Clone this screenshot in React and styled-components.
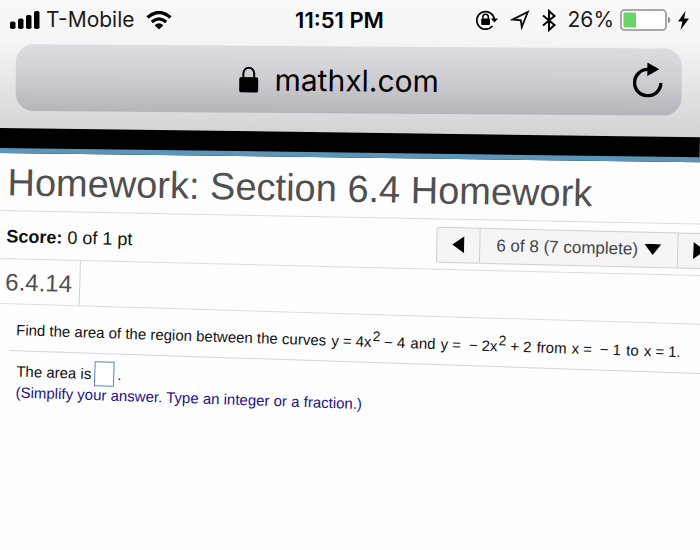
import React from "react";
import styled, { createGlobalStyle } from "styled-components";

function StatusBar() {
  return (
    <StatusContainer>
      <StatusGroup>
        <svg width="30" height="18" viewBox="0 0 30 18">
          <rect x="0" y="10.500" width="5.500" height="7.500" rx="1.800" />
          <rect x="8" y="7.500" width="5.500" height="10.500" rx="1.800" />
          <rect x="16" y="4" width="5.500" height="14" rx="1.800" />
          <rect x="24" y="0" width="5.500" height="18" rx="1.800" />
        </svg>
        <StatusText>T-Mobile</StatusText>
        <WifiIcon />
      </StatusGroup>
      <Time>11:51 PM</Time>
      <StatusGroup $end>
        <RotationLockIcon />
        <LocationIcon />
        <BluetoothIcon />
        <BatteryGroup>
          <StatusText>26%</StatusText>
          <BatteryIcon />
          <BoltIcon />
        </BatteryGroup>
      </StatusGroup>
    </StatusContainer>
  );
}

function WifiIcon() {
  return (
    <WifiSvg width="26" height="19" viewBox="0 0 26 19">
      <path d="M1.500 6.600 Q13 -3.600 24.500 6.600" strokeWidth="3.400" />
      <path d="M5.800 11 Q13 4.600 20.200 11" strokeWidth="3.200" />
      <path d="M13 18.600 L8.600 14.300 Q13 10.400 17.400 14.300 Z" fill="#000" stroke="none" />
    </WifiSvg>
  );
}

function RotationLockIcon() {
  return (
    <svg width="22" height="20" viewBox="0 0 22 20">
      <path
        d="M16.400 16 A8.800 8.800 0 1 1 18.300 9"
        fill="none"
        stroke="#000"
        strokeWidth="1.700"
      />
      <path d="M14.800 8.600 H22 L18.400 12.600 Z" />
      <rect x="5.200" y="8.600" width="8.800" height="6.400" rx="1" />
      <path d="M6.900 9.500 V7 A2.700 2.700 0 0 1 12.300 7 V9.500" fill="none" stroke="#000" strokeWidth="1.500" />
    </svg>
  );
}

function LocationIcon() {
  return (
    <svg width="20" height="20" viewBox="0 0 20 20">
      <path
        d="M17.800 2 L11.800 17 L10.800 10.200 L2.500 9.600 Z"
        fill="none"
        stroke="#111"
        strokeWidth="1.900"
      />
    </svg>
  );
}

function BluetoothIcon() {
  return (
    <svg width="14" height="23" viewBox="0 0 14 23">
      <path
        d="M1 6.500 L12.500 16 L7 21 V2 L12.500 7 L1 16.500"
        fill="none"
        stroke="#000"
        strokeWidth="2"
      />
    </svg>
  );
}

function BatteryIcon() {
  return (
    <svg width="52" height="22" viewBox="0 0 52 22">
      <rect x="1" y="1" width="45" height="20" rx="3.500" fill="#fff" stroke="#8f8f8f" strokeWidth="1.500" />
      <rect x="3.500" y="3.500" width="12.500" height="15" fill="#6bd568" />
      <path d="M48.500 8 Q51.500 11 48.500 14 Z" fill="#8f8f8f" stroke="#8f8f8f" />
    </svg>
  );
}

function BoltIcon() {
  return (
    <svg width="11" height="19" viewBox="0 0 11 19">
      <path d="M7.500 0 L0 10.500 H4.500 L2.500 19 L11 7.500 H6.200 Z" />
    </svg>
  );
}

function LockIcon() {
  return (
    <svg width="20" height="26" viewBox="0 0 20 26">
      <rect x="0.500" y="10.500" width="19" height="15.500" rx="2" />
      <path d="M4.600 11 V7 A5.400 5.900 0 0 1 15.400 7 V11" fill="none" stroke="#000" strokeWidth="2" />
    </svg>
  );
}

function ReloadIcon() {
  return (
    <svg width="30" height="35" viewBox="0 0 30 35">
      <path
        d="M28.200 20.500 A13.200 13.200 0 1 1 15 7"
        fill="none"
        stroke="#000"
        strokeWidth="3.400"
      />
      <path d="M14.500 0 L26.500 6.800 L14.500 13.500 Z" />
    </svg>
  );
}

function Arrow({ points, width = 12, height = 17 }) {
  return (
    <svg width={width} height={height} viewBox={`0 0 ${width} ${height}`}>
      <polygon points={points} />
    </svg>
  );
}

function QuestionNav() {
  return (
    <NavContainer>
      <NavButton aria-label="Previous question">
        <Arrow points="12,0 12,17 0,8.500" />
      </NavButton>
      <NavPicker>
        <NavSelect aria-label="Question">
          <option>6 of 8 (7 complete)</option>
        </NavSelect>
        <Arrow points="0,0 17,0 8.500,11" width={17} height={11} />
      </NavPicker>
      <NavButton aria-label="Next question">
        <Arrow points="0,0 12,8.500 0,17" />
      </NavButton>
    </NavContainer>
  );
}

function Exercise() {
  return (
    <>
      <Question>
        Find the area of the region between the curves{" "}
        <Formula>
          y<Op>=</Op>4x<Power>2</Power>
          <Op>−</Op>4
        </Formula>{" "}
        and{" "}
        <Formula>
          y<Op>=</Op>
          <Sign>−</Sign>2x<Power>2</Power>
          <Op>+</Op>2
        </Formula>{" "}
        from{" "}
        <Formula>
          x<Op>=</Op>
          <Sign>−</Sign>1
        </Formula>{" "}
        to{" "}
        <Formula>
          x<Op>=</Op>1.
        </Formula>
      </Question>
      <Answer>
        <AnswerLine>
          <label htmlFor="area">The area is</label>
          <AnswerInput id="area" type="text" />
          <span>.</span>
        </AnswerLine>
        <Hint>(Simplify your answer. Type an integer or a fraction.)</Hint>
      </Answer>
    </>
  );
}

function App() {
  return (
    <Page>
      <GlobalStyle />
      <BrowserChrome>
        <StatusBar />
        <AddressBar>
          <Site>
            <LockIcon />
            <span>mathxl.com</span>
          </Site>
          <ReloadButton aria-label="Reload">
            <ReloadIcon />
          </ReloadButton>
        </AddressBar>
      </BrowserChrome>
      <Band />
      <TitleRow>
        <Title>Homework: Section 6.4 Homework</Title>
      </TitleRow>
      <ScoreRow>
        <Score>
          <b>Score:</b> 0 of 1 pt
        </Score>
        <QuestionNav />
      </ScoreRow>
      <NumberRow>
        <ExerciseNumber>6.4.14</ExerciseNumber>
      </NumberRow>
      <Exercise />
    </Page>
  );
}

export default App;

const GlobalStyle = createGlobalStyle`
  * {
    box-sizing: border-box;
  }
  body {
    margin: 0;
    background: #fefefe;
  }
  svg {
    display: block;
    flex-shrink: 0;
  }
`;

const Page = styled.div`
  min-height: 100vh;
  overflow: hidden;
  background: #fefefe;
  color: #111;
  font-family: "Liberation Sans", Arial, sans-serif;
`;

const BrowserChrome = styled.header`
  height: 138px;
  margin-bottom: -10px;
  color: #000;
  background: linear-gradient(#f9f9f9 0, #f6f6f6 40px, #d2d2d2 138px);
  font-family: Inter, sans-serif;
`;

const StatusContainer = styled.div`
  display: grid;
  grid-template-columns: 1fr auto 1fr;
  align-items: center;
  height: 40px;
  padding: 0 11px 0 10px;
`;

const StatusGroup = styled.div`
  display: flex;
  align-items: center;
  justify-content: ${(props) => (props.$end ? "flex-end" : "flex-start")};
  gap: ${(props) => (props.$end ? "12px" : "6px")};
`;

const StatusText = styled.span`
  font-size: 21px;
  line-height: 24px;
  color: #1a1a1a;
`;

const Time = styled.span`
  margin-right: 20px;
  font-size: 22px;
  line-height: 24px;
  font-weight: 600;
`;

const BatteryGroup = styled.div`
  display: flex;
  align-items: center;
  gap: 6px;
`;

const WifiSvg = styled.svg`
  margin-left: 5px;
  fill: none;
  stroke: #000;
`;

const AddressBar = styled.div`
  display: grid;
  grid-template-columns: 1fr auto 1fr;
  align-items: center;
  height: 67px;
  margin: 4px 18px 0 16px;
  padding: 0 19px;
  border-radius: 18px;
  background: linear-gradient(#dddde1, #cdcdd1 50%, #b4b5ba);
  transform: rotate(0.4deg);
  transform-origin: left top;
`;

const Site = styled.div`
  grid-column: 2;
  display: flex;
  align-items: center;
  gap: 16px;
  margin-right: 20px;
  font-size: 30px;
  line-height: 36px;
`;

const ReloadButton = styled.button`
  justify-self: end;
  padding: 0 0 4px;
  border: none;
  background: none;
`;

const Band = styled.div`
  height: 25px;
  background: #000;
  border-bottom: 5px solid #5b96b8;
  transform: rotate(0.75deg);
  transform-origin: left top;
`;

/* every row leans a little further than the one above it */
const Row = styled.div`
  display: flex;
  align-items: center;
  margin-right: -2px;
  border-bottom: 1px solid #dcdce6;
  transform-origin: left top;
`;

const TitleRow = styled(Row)`
  height: 58px;
  padding: 0 8px;
  transform: rotate(1.1deg);
`;

const Title = styled.h1`
  margin: 0;
  font-size: 38px;
  line-height: 44px;
  font-weight: normal;
  color: #505050;
  white-space: nowrap;
`;

const ScoreRow = styled(Row)`
  justify-content: space-between;
  height: 48px;
  padding-left: 7px;
  font-size: 18px;
  transform: rotate(1.4deg);
`;

const Score = styled.div`
  margin-top: 3px;
`;

const NavContainer = styled.nav`
  display: flex;
  height: 36px;
  margin-right: -20px;
  margin-bottom: 2px;
  border: 1px solid #cfcfcf;
  border-radius: 3px;
  background: #f5f5f5;
`;

const NavButton = styled.button`
  display: flex;
  align-items: center;
  justify-content: center;
  width: 42px;
  padding: 0;
  border: none;
  background: none;
`;

const NavPicker = styled.div`
  display: flex;
  align-items: center;
  gap: 6px;
  padding: 0 16px;
  border-left: 1px solid #cfcfcf;
  border-right: 1px solid #cfcfcf;
`;

const NavSelect = styled.select`
  appearance: none;
  padding: 0;
  border: none;
  background: none;
  color: #444;
  font-family: inherit;
  font-size: 17px;
`;

const NumberRow = styled(Row)`
  align-items: stretch;
  height: 45px;
  transform: rotate(1.7deg);
`;

const ExerciseNumber = styled.h2`
  margin: 0;
  padding: 0 7px 0 6px;
  border-right: 1px solid #cfcfdb;
  font-size: 24px;
  line-height: 46px;
  font-weight: normal;
  color: #505050;
`;

const Question = styled.p`
  margin: 0 -2px 0 11px;
  padding: 17px 0 11px 6px;
  border-bottom: 1px solid #d2d2e0;
  font-size: 15px;
  line-height: 18px;
  white-space: nowrap;
  transform: rotate(1.9deg);
  transform-origin: left top;
`;

const Formula = styled.span`
  margin: 0 1px;
`;

const Op = styled.span`
  margin: 0 4px;
`;

const Sign = styled.span`
  margin: 0 4px;
`;

const Power = styled.sup`
  margin-left: 1px;
  font-size: 14px;
  line-height: 0;
  vertical-align: 6px;
`;

const Answer = styled.div`
  padding: 7px 17px;
  font-size: 15px;
  line-height: 18px;
  transform: rotate(1.9deg);
  transform-origin: left top;
`;

const AnswerLine = styled.div`
  display: flex;
  align-items: center;
  gap: 3px;
`;

const AnswerInput = styled.input`
  width: 20px;
  height: 25px;
  padding: 0;
  border: 1px solid #5584c8;
  background: #fff;
  font: inherit;
  text-align: center;
`;

const Hint = styled.div`
  color: #1c1280;
`;
